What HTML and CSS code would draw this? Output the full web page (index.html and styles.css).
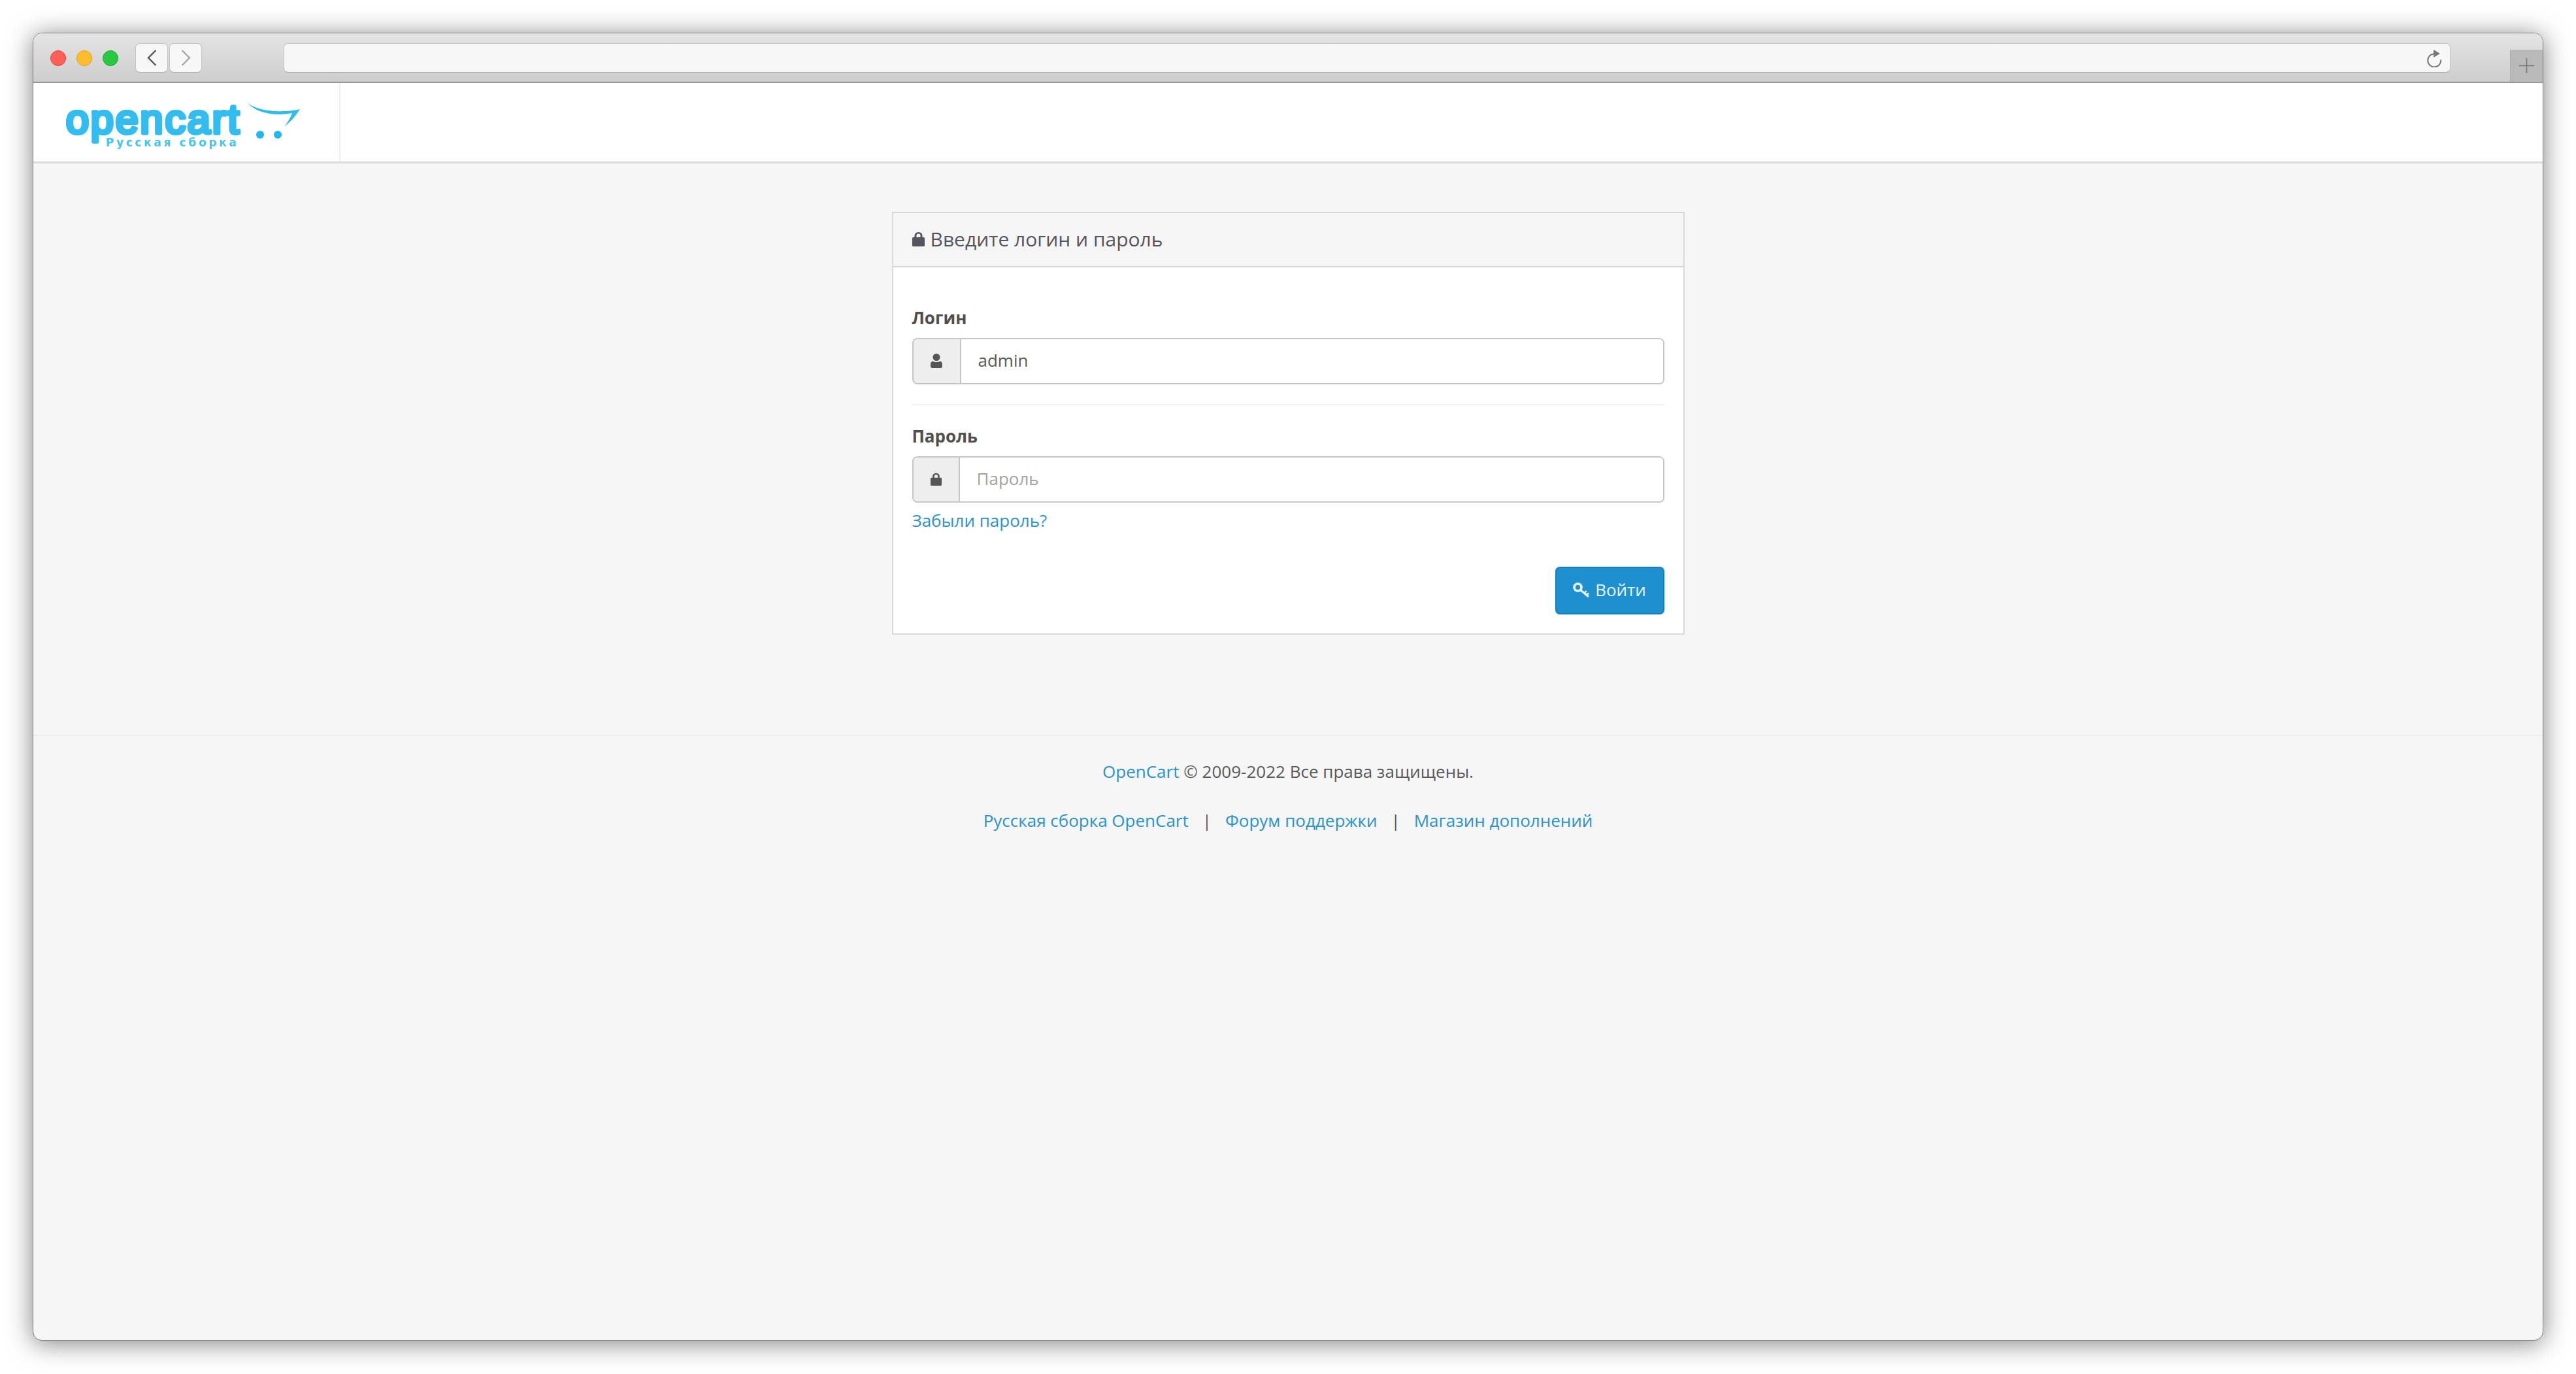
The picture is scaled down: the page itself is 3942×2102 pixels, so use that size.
FILE: index.html
```html
<!DOCTYPE html>
<html lang="ru">
<head>
    <meta charset="UTF-8">
    <title>OpenCart - Авторизация</title>
    <link rel="stylesheet" href="styles.css">
</head>
<body>

<div class="window">
    <div class="titlebar">
        <span class="light light-red"></span>
        <span class="light light-yellow"></span>
        <span class="light light-green"></span>
        <div class="nav-buttons">
            <span class="nav-btn">
                <svg width="15" height="25" viewBox="0 0 15 25"><path d="M13.500 1 2 12.500 13.500 24" fill="none" stroke="#555" stroke-width="2.400"/></svg>
            </span>
            <span class="nav-btn">
                <svg width="15" height="25" viewBox="0 0 15 25"><path d="M1.500 1 13 12.500 1.500 24" fill="none" stroke="#a8a8a8" stroke-width="2.400"/></svg>
            </span>
        </div>
        <div class="address-bar">
            <svg class="reload" width="24" height="28" viewBox="0 0 24 28"><path d="M11 7.500a10 10 0 1 0 11.200 9" fill="none" stroke="#777" stroke-width="2"/><path d="M11 1v12l10-6z" fill="#777"/></svg>
        </div>
        <div class="new-tab">
            <svg width="23" height="23" viewBox="0 0 23 23"><path d="M0 11.500h23M11.500 0v23" stroke="#777" stroke-width="1.600"/></svg>
        </div>
    </div>

    <header class="top-header">
        <div class="logo-cell">
            <svg class="logo" width="468" height="120" viewBox="51 127 468 120">
                <defs>
                    <linearGradient id="logoFill" x1="0" y1="0" x2="0" y2="1">
                        <stop offset="0" stop-color="#3cc0ee"/>
                        <stop offset="1" stop-color="#16b5f0"/>
                    </linearGradient>
                </defs>
                <text class="logo-name" x="101" y="204" textLength="265">opencart</text>
                <text class="logo-sub" x="162" y="224" textLength="200">Русская сборка</text>
                <path d="M378 157c14 12 48 17 81 10-6 10-14 19-24 27 6-8 10-15 12-21-24 5-54 1-69-16z" fill="#2dbcef"/>
                <circle cx="398" cy="206" r="6" fill="#1fb8f0"/>
                <circle cx="425" cy="206" r="6" fill="#1fb8f0"/>
            </svg>
        </div>
    </header>

    <main class="content">
        <div class="panel">
            <div class="panel-heading">
                <svg class="icon-title" width="19" height="23" viewBox="0 0 19 23"><path d="M3.500 9V6.500a6 5.500 0 0 1 12 0V9h2A1.500 1.500 0 0 1 19 10.500v11a1.500 1.500 0 0 1-1.500 1.500h-16A1.500 1.500 0 0 1 0 21.500v-11A1.500 1.500 0 0 1 1.500 9zm3 0h6V6.500a3 3 0 0 0-6 0z" fill="#55555f"/></svg>
                <h1 class="panel-title">Введите логин и пароль</h1>
            </div>
            <form class="panel-body">
                <label class="field-label" for="username">Логин</label>
                <div class="input-group">
                    <span class="addon">
                        <svg width="18" height="22" viewBox="0 0 18 22"><ellipse cx="9" cy="5.500" rx="5.500" ry="5.500" fill="#555"/><path d="M3.500 11.500c1.500 1 3.500 1.500 5.500 1.500s4-.5 5.500-1.500c2.500.5 3.500 2.500 3.500 5.500v2.500c0 1.500-1 2.500-2.500 2.500h-13C1 22 0 21 0 19.500V17c0-3 1-5 3.500-5.500z" fill="#555"/></svg>
                    </span>
                    <input class="text-input" id="username" type="text" value="admin">
                </div>
                <div class="divider"></div>
                <label class="field-label" for="password">Пароль</label>
                <div class="input-group">
                    <span class="addon addon-narrow">
                        <svg width="17" height="20" viewBox="0 0 19 23" preserveAspectRatio="none"><path d="M3.500 9V6.500a6 5.500 0 0 1 12 0V9h2A1.500 1.500 0 0 1 19 10.500v11a1.500 1.500 0 0 1-1.500 1.500h-16A1.500 1.500 0 0 1 0 21.500v-11A1.500 1.500 0 0 1 1.500 9zm3 0h6V6.500a3 3 0 0 0-6 0z" fill="#555"/></svg>
                    </span>
                    <input class="text-input" id="password" type="password" placeholder="Пароль">
                </div>
                <a class="link forgot" href="#">Забыли пароль?</a>
                <div class="form-actions">
                    <button class="btn-login" type="button">
                        <svg width="25" height="23" viewBox="0 0 25 23" fill="none" stroke="#e8f6fd"><circle cx="7.500" cy="7.500" r="5.500" stroke-width="3.600"/><path d="M11.500 11.500 24 22" stroke-width="3.200"/><path d="M17.500 16.500l3-3.500M21 19.500l3-3" stroke-width="2.600"/></svg>
                        <span>Войти</span>
                    </button>
                </div>
            </form>
        </div>

        <footer class="page-footer">
            <p class="copyright"><a class="link" href="#">OpenCart</a> © 2009-2022 Все права защищены.</p>
            <p class="footer-links">
                <a class="link" href="#">Русская сборка OpenCart</a>
                <span class="sep">|</span>
                <a class="link" href="#">Форум поддержки</a>
                <span class="sep">|</span>
                <a class="link" href="#">Магазин дополнений</a>
            </p>
        </footer>
    </main>
</div>

</body>
</html>
```

FILE: styles.css
```css
* {
    box-sizing: border-box;
}
html, body {
    height: 100%;
}
body {
    margin: 0;
    padding: 50px 50px 51px 50px;
    background-color: #ffffff;
    font-family: "Open Sans", sans-serif;
    font-size: 26px;
    color: #595959;
}
.window {
    display: flex;
    flex-direction: column;
    height: 100%;
    border: 1px solid #7d7d7d;
    border-radius: 14px;
    overflow: clip;
    background-color: #f6f6f6;
    box-shadow: 0 4px 38px rgba(0, 0, 0, 0.5);
}

/* title bar */
.titlebar {
    display: flex;
    align-items: center;
    flex: none;
    height: 76px;
    padding: 1px 0 0 26px;
    background: linear-gradient(#e4e4e4, #cdcdcd);
    border-bottom: 2px solid #979797;
}
.light {
    width: 24px;
    height: 24px;
    margin-right: 16px;
    border-radius: 50%;
}
.light-red {
    background-color: #ff5f57;
    border: 1px solid #e2463f;
}
.light-yellow {
    background-color: #ffbd2e;
    border: 1px solid #e1a116;
}
.light-green {
    background-color: #28c940;
    border: 1px solid #14ae2b;
}
.nav-buttons {
    display: flex;
    gap: 2px;
    margin-left: 10px;
}
.nav-btn {
    display: flex;
    align-items: center;
    justify-content: center;
    width: 50px;
    height: 45px;
    background: #f7f7f7;
    border: 1px solid #c4c4c4;
    border-bottom-color: #a8a8a8;
    border-radius: 7px;
}
.address-bar {
    display: flex;
    align-items: center;
    justify-content: flex-end;
    flex: 1;
    height: 45px;
    margin: 0 91px 0 125px;
    padding-right: 12px;
    background: #f7f7f7;
    border: 1px solid #c4c4c4;
    border-bottom-color: #a0a0a0;
    border-radius: 7px;
}
.new-tab {
    display: flex;
    align-items: center;
    justify-content: center;
    align-self: flex-end;
    width: 50px;
    height: 49px;
    background-color: #b9b9b9;
    border-left: 1px solid #adadad;
}

/* header */
.top-header {
    flex: none;
    height: 123px;
    background-color: #ffffff;
    border-bottom: 3px solid #dcdcdc;
}
.logo-cell {
    width: 470px;
    height: 100%;
    border-right: 2px solid #eeeeee;
}
.logo {
    display: block;
    filter: blur(0.7px);
}
.logo-name {
    font-family: "Liberation Sans", sans-serif;
    font-size: 63px;
    fill: url(#logoFill);
    stroke: #32bcf0;
    stroke-width: 5.500;
    stroke-linejoin: round;
}
.logo-sub {
    font-family: "DejaVu Sans", sans-serif;
    font-size: 17px;
    font-weight: bold;
    fill: #45c4f0;
}

/* login panel */
.content {
    flex: 1;
    padding-top: 74px;
}
.panel {
    width: 1213px;
    margin: 0 auto;
    background-color: #ffffff;
    border: 2px solid #d9d9d9;
}
.panel-heading {
    display: flex;
    align-items: center;
    gap: 9px;
    height: 83px;
    padding: 0 29px 2px;
    background-color: #f5f5f5;
    border-bottom: 2px solid #d9d9d9;
}
.panel-title {
    margin: 0;
    font-size: 30px;
    font-weight: normal;
    color: #55555f;
}
.panel-body {
    display: block;
    padding: 57px 29px 29px;
}
.field-label {
    display: block;
    margin-bottom: 11px;
    font-weight: bold;
    line-height: 40px;
    color: #4f4f4f;
}
.input-group {
    display: flex;
    height: 71px;
    border: 2px solid #c6c6c6;
    border-radius: 8px;
    overflow: hidden;
}
.addon {
    display: flex;
    align-items: center;
    justify-content: center;
    flex: none;
    width: 73px;
    padding-bottom: 2px;
    background-color: #eeeeee;
    border-right: 2px solid #c6c6c6;
}
.addon-narrow {
    width: 71px;
}
.text-input {
    flex: 1;
    min-width: 0;
    padding: 0 26px 4px;
    border: 0;
    outline: 0;
    font-family: inherit;
    font-size: 26px;
    color: #595959;
    background-color: #ffffff;
}
.text-input::placeholder {
    color: #a3a3a3;
}
.divider {
    height: 2px;
    margin: 30px 0 27px;
    background-color: #f0f0f0;
}
.link {
    color: #2a93c9;
    text-decoration: none;
}
.forgot {
    display: block;
    margin-top: 7px;
    line-height: 40px;
}
.form-actions {
    display: flex;
    justify-content: flex-end;
    margin-top: 51px;
}
.btn-login {
    display: flex;
    align-items: center;
    justify-content: center;
    gap: 9px;
    width: 167px;
    height: 73px;
    padding: 0 0 3px;
    border: 2px solid #1a7fb8;
    border-radius: 7px;
    background-color: #1f90cf;
    font-family: inherit;
    font-size: 26px;
    color: #e8f6fd;
}

/* footer */
.page-footer {
    margin-top: 153px;
    padding-top: 34px;
    border-top: 2px solid #eeeeee;
    text-align: center;
    line-height: 40px;
}
.page-footer p {
    margin: 0;
}
.footer-links {
    display: flex;
    justify-content: center;
    gap: 21px;
    margin-top: 35px !important;
}
```
